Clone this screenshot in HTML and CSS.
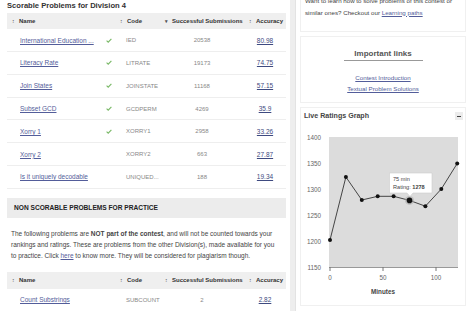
FILE: index.html
```html
<!DOCTYPE html>
<html lang="en">
<head>
  <meta charset="UTF-8">
  <title>Contest Problems</title>
  <link rel="stylesheet" href="styles.css">
</head>
<body>

  <div class="page">
    <div class="main">
      <h3 class="title">Scorable Problems for Division 4</h3>

      <table class="problems">
        <colgroup>
          <col class="w-name"><col class="w-check"><col class="w-code"><col class="w-subs"><col class="w-acc">
        </colgroup>
        <thead>
          <tr>
            <th colspan="2" class="th-name"><span class="sort">&#8597;</span>Name</th>
            <th class="th-code"><span class="sort">&#8597;</span>Code</th>
            <th><span class="sort">&#9662;</span>Successful Submissions</th>
            <th><span class="sort">&#8597;</span>Accuracy</th>
          </tr>
        </thead>
        <tbody>
          <tr>
            <td class="name"><a href="#">International Education ...</a></td>
            <td class="check"><svg width="6" height="5" viewBox="0 0 6 5"><path d="M0.6 2.7 L2.2 4.2 L5.4 0.8" fill="none" stroke="#78b865" stroke-width="1.1"/></svg></td>
            <td class="code">IED</td>
            <td class="subs">20538</td>
            <td class="acc"><a href="#">80.98</a></td>
          </tr>
          <tr>
            <td class="name"><a href="#">Literacy Rate</a></td>
            <td class="check"><svg width="6" height="5" viewBox="0 0 6 5"><path d="M0.6 2.7 L2.2 4.2 L5.4 0.8" fill="none" stroke="#78b865" stroke-width="1.1"/></svg></td>
            <td class="code">LITRATE</td>
            <td class="subs">19173</td>
            <td class="acc"><a href="#">74.75</a></td>
          </tr>
          <tr>
            <td class="name"><a href="#">Join States</a></td>
            <td class="check"><svg width="6" height="5" viewBox="0 0 6 5"><path d="M0.6 2.7 L2.2 4.2 L5.4 0.8" fill="none" stroke="#78b865" stroke-width="1.1"/></svg></td>
            <td class="code">JOINSTATE</td>
            <td class="subs">11168</td>
            <td class="acc"><a href="#">57.15</a></td>
          </tr>
          <tr>
            <td class="name"><a href="#">Subset GCD</a></td>
            <td class="check"><svg width="6" height="5" viewBox="0 0 6 5"><path d="M0.6 2.7 L2.2 4.2 L5.4 0.8" fill="none" stroke="#78b865" stroke-width="1.1"/></svg></td>
            <td class="code">GCDPERM</td>
            <td class="subs">4269</td>
            <td class="acc"><a href="#">35.9</a></td>
          </tr>
          <tr>
            <td class="name"><a href="#">Xorry 1</a></td>
            <td class="check"><svg width="6" height="5" viewBox="0 0 6 5"><path d="M0.6 2.7 L2.2 4.2 L5.4 0.8" fill="none" stroke="#78b865" stroke-width="1.1"/></svg></td>
            <td class="code">XORRY1</td>
            <td class="subs">2958</td>
            <td class="acc"><a href="#">33.26</a></td>
          </tr>
          <tr>
            <td class="name"><a href="#">Xorry 2</a></td>
            <td class="check"></td>
            <td class="code">XORRY2</td>
            <td class="subs">663</td>
            <td class="acc"><a href="#">27.87</a></td>
          </tr>
          <tr>
            <td class="name"><a href="#">Is it uniquely decodable</a></td>
            <td class="check"></td>
            <td class="code">UNIQUED...</td>
            <td class="subs">188</td>
            <td class="acc"><a href="#">19.34</a></td>
          </tr>
        </tbody>
      </table>

      <div class="practice-head">NON SCORABLE PROBLEMS FOR PRACTICE</div>

      <p class="note">The following problems are <b>NOT part of the contest</b>, and will not be counted towards your<br>
        rankings and ratings. These are problems from the other Division(s), made available for you<br>
        to practice. Click <a href="#">here</a> to know more. They will be considered for plagiarism though.</p>

      <table class="problems practice">
        <colgroup>
          <col class="w-name"><col class="w-check"><col class="w-code"><col class="w-subs"><col class="w-acc">
        </colgroup>
        <thead>
          <tr>
            <th colspan="2" class="th-name"><span class="sort">&#8597;</span>Name</th>
            <th class="th-code"><span class="sort">&#8597;</span>Code</th>
            <th><span class="sort">&#8597;</span>Successful Submissions</th>
            <th><span class="sort">&#8597;</span>Accuracy</th>
          </tr>
        </thead>
        <tbody>
          <tr>
            <td class="name"><a href="#">Count Substrings</a></td>
            <td class="check"></td>
            <td class="code">SUBCOUNT</td>
            <td class="subs">2</td>
            <td class="acc"><a href="#">2.82</a></td>
          </tr>
        </tbody>
      </table>
    </div>

    <div class="divider"></div>

    <div class="side">
      <div class="card learn">
        Want to learn how to solve problems of this contest or similar ones? Checkout our <a href="#">Learning paths</a>
      </div>

      <div class="card links">
        <h4>Important links</h4>
        <a href="#">Contest Introduction</a>
        <a href="#">Textual Problem Solutions</a>
      </div>

      <div class="card graph">
        <div class="graph-head">
          <span>Live Ratings Graph</span>
          <span class="collapse"></span>
        </div>
        <svg class="chart" width="164" height="178" viewBox="301 125 164 178">
          <rect x="329" y="137" width="129" height="130" fill="#dcdcdc"/>
          <line x1="329" y1="267.5" x2="458" y2="267.5" stroke="#999" stroke-width="1"/>
          <line x1="330" y1="267" x2="330" y2="271" stroke="#777"/>
          <line x1="383" y1="267" x2="383" y2="271" stroke="#777"/>
          <line x1="436" y1="267" x2="436" y2="271" stroke="#777"/>

          <g class="ylab">
            <text x="321" y="139.5">1400</text>
            <text x="321" y="165.5">1350</text>
            <text x="321" y="191.5">1300</text>
            <text x="321" y="217.5">1250</text>
            <text x="321" y="243.5">1200</text>
            <text x="321" y="269.5">1150</text>
          </g>
          <g class="xlab">
            <text x="330" y="280">0</text>
            <text x="383" y="280">50</text>
            <text x="436" y="280">100</text>
          </g>
          <text class="axis-title" x="383" y="294">Minutes</text>

          <polyline fill="none" stroke="#333" stroke-width="0.9"
            points="330,240 345.9,177 361.8,200 377.7,196.3 393.6,196.3 409.5,200.4 425.4,206.2 441.3,189 457.2,163.5"/>
          <g fill="#111">
            <circle cx="330" cy="240" r="2"/>
            <circle cx="345.9" cy="177" r="2"/>
            <circle cx="361.8" cy="200" r="2"/>
            <circle cx="377.7" cy="196.3" r="2"/>
            <circle cx="393.6" cy="196.3" r="2"/>
            <circle cx="425.4" cy="206.2" r="2"/>
            <circle cx="441.3" cy="189" r="2"/>
            <circle cx="457.2" cy="163.5" r="2"/>
          </g>
          <circle cx="409.5" cy="200.4" r="4.5" fill="#aaa" opacity="0.6"/>
          <circle cx="409.5" cy="200.4" r="2.8" fill="#111"/>

          <g class="tip">
            <path d="M389.5 173 H432 V193 H413 L410 196.5 L407 193 H389.5 Z" fill="#fff" stroke="#ccc" stroke-width="0.6"/>
            <text x="393" y="181">75 min</text>
            <text x="393" y="189">Rating: <tspan font-weight="bold">1278</tspan></text>
          </g>
        </svg>
      </div>
    </div>
  </div>

</body>
</html>
```

FILE: styles.css
```css
body {
  margin: 0;
  font-family: "Liberation Sans", Arial, sans-serif;
  background: white;
  color: #333;
}
.page {
  display: flex;
  height: 311px;
  overflow: hidden;
}
.main {
  width: 279px;
  padding: 0 4px 0 7px;
}
.title {
  margin: 0;
  font-size: 7.6px;
  line-height: 12.7px;
  color: #333;
}
.problems {
  width: 279px;
  table-layout: fixed;
  border-collapse: collapse;
}
.w-name { width: 94px; }
.w-check { width: 16px; }
.w-code { width: 43px; }
.w-subs { width: 84px; }
.w-acc { width: 42px; }
.problems th {
  background: #efefef;
  height: 16.6px;
  padding: 0 0 0 5px;
  text-align: left;
  font-size: 6px;
  font-weight: bold;
  color: #333;
  white-space: nowrap;
}
.problems th.th-code {
  padding-left: 3px;
}
.sort {
  display: inline-block;
  width: 3px;
  margin-right: 4px;
  font-size: 5px;
  color: #555;
}
.problems td {
  height: 21.8px;
  padding: 0;
  border-bottom: 1px solid #eee;
  font-size: 6px;
  color: #888;
  white-space: nowrap;
  overflow: hidden;
}
.problems td.name {
  padding-left: 13px;
  font-size: 6.5px;
}
.name a {
  color: #535d9a;
}
.problems td.check {
  text-align: center;
  line-height: 0;
}
.problems td.code {
  padding-left: 9px;
}
.subs {
  text-align: center;
}
.acc {
  text-align: center;
}
.problems td.acc a {
  color: #3e4a80;
  font-size: 6.5px;
}
.practice-head {
  margin-top: 9.5px;
  height: 20px;
  line-height: 20px;
  padding-left: 7px;
  background: #ececec;
  font-size: 6.6px;
  font-weight: bold;
  color: #222;
}
.note {
  margin: 9.7px 0 10.5px;
  padding-left: 4px;
  font-size: 6.5px;
  line-height: 11.2px;
  color: #444;
  white-space: nowrap;
}
.note a {
  color: #535d9a;
}
.divider {
  width: 5px;
  background: #eeeeee;
  border-right: 1px solid #e3e3e3;
}
.side {
  padding-left: 4px;
  width: 166px;
}
.card {
  border: 1px solid #f0f0f0;
  background: white;
  margin-bottom: 4px;
}
.learn {
  margin-top: -11.3px;
  padding: 5px 4px 12px;
  font-size: 6.2px;
  line-height: 12px;
  color: #444;
}
.learn a {
  color: #535d9a;
}
.links {
  padding: 11.2px 0 8px;
  text-align: center;
}
.links h4 {
  width: 79px;
  margin: 0 auto 10.5px;
  padding-bottom: 1.5px;
  border-bottom: 1px solid #999;
  font-size: 8px;
  line-height: 11px;
  color: #555;
}
.links a {
  display: block;
  font-size: 6.2px;
  line-height: 11px;
  color: #535d9a;
}
.graph-head {
  display: flex;
  justify-content: space-between;
  align-items: center;
  height: 17px;
  padding: 0 2px 0 3px;
  font-size: 7.1px;
  font-weight: bold;
  color: #444;
}
.collapse {
  width: 8px;
  height: 8px;
  background: #ececec;
  position: relative;
}
.collapse::after {
  content: "";
  position: absolute;
  left: 2px;
  top: 3.5px;
  width: 4px;
  height: 1px;
  background: #444;
}
.chart {
  display: block;
  margin-bottom: 2px;
}
.chart text {
  font-family: "Liberation Sans", Arial, sans-serif;
  font-size: 6.3px;
  fill: #666;
}
.ylab text {
  text-anchor: end;
}
.xlab text {
  text-anchor: middle;
}
.chart .axis-title {
  text-anchor: middle;
  font-weight: bold;
  fill: #444;
}
.chart .tip text {
  font-size: 5.6px;
  fill: #444;
}
```
